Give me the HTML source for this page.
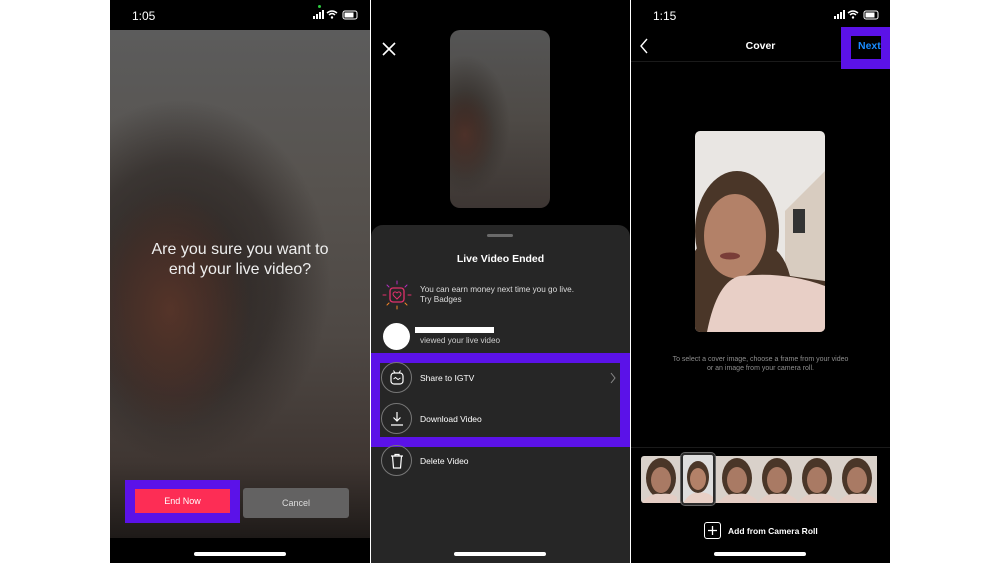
<!DOCTYPE html>
<html><head><meta charset="utf-8"><style>
*{margin:0;padding:0;box-sizing:border-box}
body{width:1000px;height:563px;background:#fff;position:relative;overflow:hidden;font-family:"Liberation Sans",sans-serif}
.a{position:absolute}
.t{color:#fff;white-space:nowrap}
</style></head><body>

<!-- LEFT PANEL -->
<div class="a" style="left:110px;top:0;width:260px;height:563px;background:#000;overflow:hidden">
  <div class="a t" style="left:22px;top:9px;font-size:12px">1:05</div>
  <div class="a" style="left:208px;top:5px;width:3px;height:3px;border-radius:50%;background:#2ecc40"></div>
  <svg class="a" style="left:203px;top:10px" width="48" height="10">
    <rect x="0" y="6" width="2" height="3" fill="#fff"/><rect x="3" y="4" width="2" height="5" fill="#fff"/><rect x="6" y="2" width="2" height="7" fill="#fff"/><rect x="9" y="0" width="2" height="9" fill="#fff"/>
    <path d="M14 3 Q19 -1 24 3 M16 5 Q19 2 22 5" stroke="#fff" stroke-width="1.5" fill="none"/><circle cx="19" cy="7.5" r="1.2" fill="#fff"/>
    <rect x="30" y="1" width="14" height="8" rx="2" stroke="#fff" fill="none"/><rect x="31.5" y="2.5" width="9" height="5" fill="#fff"/>
  </svg>
  <div class="a" style="left:0;top:30px;width:260px;height:508px;background:
    radial-gradient(ellipse 80px 120px at 60px 280px,#553429 0%,rgba(75,48,40,.7) 55%,rgba(60,50,45,0) 100%),
    radial-gradient(ellipse 150px 180px at 70px 250px,#2a2320 0%,rgba(40,34,32,.6) 65%,rgba(0,0,0,0) 100%),
    linear-gradient(180deg,#5c5c5c 0%,#57534f 30%,#4e4844 60%,#3f3632 85%,#1e1a18 100%)"></div>
  <div class="a t" style="left:0;top:240px;width:260px;text-align:center;font-size:16px;line-height:20px;color:#eee">Are you sure you want to<br>end your live video?</div>
  <div class="a" style="left:15px;top:480px;width:115px;height:43px;background:#5b12e8"></div>
  <div class="a t" style="left:25px;top:489px;width:95px;height:24px;background:#fd2d55;text-align:center;line-height:24px;font-size:9px">End Now</div>
  <div class="a t" style="left:133px;top:488px;width:106px;height:30px;background:#636262;border-radius:3px;text-align:center;line-height:30px;font-size:9px;color:#ddd">Cancel</div>
  <div class="a" style="left:84px;top:552px;width:92px;height:4px;border-radius:2px;background:#fff"></div>
</div>

<!-- MIDDLE PANEL -->
<div class="a" style="left:371px;top:0;width:259px;height:563px;background:#000;overflow:hidden">
  <svg class="a" style="left:11px;top:42px" width="14" height="14"><path d="M1 1L13 13M13 1L1 13" stroke="#fff" stroke-width="1.6"/></svg>
  <div class="a" style="left:79px;top:30px;width:100px;height:178px;border-radius:10px;background:
    radial-gradient(ellipse 30px 45px at 15px 105px,#4d3129 0%,rgba(70,45,38,0) 100%),
    radial-gradient(ellipse 45px 70px at 15px 95px,#2a2420 0%,rgba(0,0,0,0) 100%),
    linear-gradient(180deg,#555 0%,#4e4a46 50%,#3d3633 100%)"></div>
  <div class="a" style="left:0;top:225px;width:259px;height:338px;background:#262626;border-radius:12px 12px 0 0"></div>
  <div class="a" style="left:116px;top:234px;width:26px;height:3px;border-radius:2px;background:#6a6a6a"></div>
  <div class="a t" style="left:0;top:253px;width:259px;text-align:center;font-size:10.5px;font-weight:bold">Live Video Ended</div>
  <svg class="a" style="left:11px;top:280px" width="30" height="30">
    <g stroke-width="1" stroke-linecap="round">
    <path d="M15 1V4" stroke="#b42fbf"/><path d="M15 26V29" stroke="#f58529"/><path d="M1 15H4" stroke="#e1306c"/><path d="M26 15H29" stroke="#e1306c"/>
    <path d="M5 5L7 7" stroke="#b42fbf"/><path d="M25 5L23 7" stroke="#b42fbf"/><path d="M5 25L7 23" stroke="#f58529"/><path d="M25 25L23 23" stroke="#f58529"/></g>
    <rect x="8" y="8" width="14" height="14" rx="3" stroke="#e1306c" stroke-width="1.3" fill="none"/>
    <path d="M15 19 L11.5 15.5 A2 2 0 0 1 15 12.8 A2 2 0 0 1 18.5 15.5Z" stroke="#e1306c" stroke-width="1" fill="none"/>
  </svg>
  <div class="a t" style="left:49px;top:285px;font-size:8.2px;line-height:10px;color:#ddd">You can earn money next time you go live.<br>Try Badges</div>
  <div class="a" style="left:12px;top:323px;width:27px;height:27px;border-radius:50%;background:#fff"></div>
  <div class="a" style="left:44px;top:327px;width:79px;height:6px;background:#fff"></div>
  <div class="a t" style="left:49px;top:336px;font-size:8.2px;color:#ccc">viewed your live video</div>
  <div class="a" style="left:-1px;top:353px;width:260px;height:94px;background:#5b12e8"></div>
  <div class="a" style="left:9px;top:363px;width:240px;height:74px;background:#262626"></div>
  <div class="a" style="left:10px;top:362px;width:31px;height:31px;border-radius:50%;border:1px solid #777"></div>
  <svg class="a" style="left:17px;top:369px" width="18" height="18"><rect x="3" y="4" width="12" height="11" rx="3" stroke="#fff" stroke-width="1.2" fill="none"/><path d="M7 4L5.5 1.5M11 4L12.5 1.5" stroke="#fff" stroke-width="1"/><path d="M5.5 10L7.5 8.5L10 10.5L12.5 9" stroke="#fff" stroke-width="1" fill="none"/></svg>
  <div class="a t" style="left:49px;top:373px;font-size:8.5px">Share to IGTV</div>
  <svg class="a" style="left:238px;top:372px" width="8" height="12"><path d="M2 1L6 6L2 11" stroke="#888" stroke-width="1" fill="none"/></svg>
  <div class="a" style="left:10px;top:403px;width:31px;height:31px;border-radius:50%;border:1px solid #777"></div>
  <svg class="a" style="left:17px;top:410px" width="18" height="18"><path d="M9 2V11M5.5 7.5L9 11L12.5 7.5M3 15H15" stroke="#fff" stroke-width="1.2" fill="none"/></svg>
  <div class="a t" style="left:49px;top:414px;font-size:8.5px">Download Video</div>
  <div class="a" style="left:10px;top:445px;width:31px;height:31px;border-radius:50%;border:1px solid #777"></div>
  <svg class="a" style="left:17px;top:452px" width="18" height="18"><path d="M3 4H15M7 4V2.5H11V4M4.5 4L5.5 16H12.5L13.5 4" stroke="#fff" stroke-width="1.2" fill="none"/></svg>
  <div class="a t" style="left:49px;top:456px;font-size:8.5px">Delete Video</div>
  <div class="a" style="left:83px;top:552px;width:92px;height:4px;border-radius:2px;background:#fff"></div>
</div>

<!-- RIGHT PANEL -->
<div class="a" style="left:631px;top:0;width:259px;height:563px;background:#000;overflow:hidden">
  <div class="a t" style="left:22px;top:9px;font-size:12px">1:15</div>
  <svg class="a" style="left:203px;top:10px" width="48" height="10">
    <rect x="0" y="6" width="2" height="3" fill="#fff"/><rect x="3" y="4" width="2" height="5" fill="#fff"/><rect x="6" y="2" width="2" height="7" fill="#fff"/><rect x="9" y="0" width="2" height="9" fill="#fff"/>
    <path d="M14 3 Q19 -1 24 3 M16 5 Q19 2 22 5" stroke="#fff" stroke-width="1.5" fill="none"/><circle cx="19" cy="7.5" r="1.2" fill="#fff"/>
    <rect x="30" y="1" width="14" height="8" rx="2" stroke="#fff" fill="none"/><rect x="31.5" y="2.5" width="9" height="5" fill="#fff"/>
  </svg>
  <svg class="a" style="left:8px;top:38px" width="10" height="16"><path d="M8 1L2 8L8 15" stroke="#fff" stroke-width="1.4" fill="none"/></svg>
  <div class="a t" style="left:0;top:40px;width:259px;text-align:center;font-size:10.5px;font-weight:bold">Cover</div>
  <div class="a" style="left:0;top:61px;width:259px;height:1px;background:#1a1a1a"></div>
  <div class="a" style="left:210px;top:27px;width:49px;height:42px;background:#5b12e8"></div>
  <div class="a" style="left:220px;top:36px;width:30px;height:23px;background:#000"></div>
  <div class="a" style="left:227px;top:40px;font-size:10.5px;font-weight:bold;color:#1a8cff">Next</div>
  <svg class="a" style="left:64px;top:131px" width="130" height="201" viewBox="0 0 130 201">
    <defs><clipPath id="c"><rect width="130" height="201" rx="5"/></clipPath></defs>
    <g clip-path="url(#c)">
    <rect width="130" height="201" fill="#e9e6e3"/>
    <path d="M90 80L130 40V201H90Z" fill="#d8ccc0"/>
    <rect x="98" y="78" width="12" height="24" fill="#333"/>
    <ellipse cx="42" cy="100" rx="42" ry="60" fill="#4a3628"/>
    <path d="M0 201 L0 120 Q20 90 45 110 Q85 105 95 145 L130 150 V201Z" fill="#4a3628"/>
    <ellipse cx="40" cy="105" rx="31" ry="42" fill="#b38168"/>
    <path d="M12 201 Q22 150 45 145 Q90 140 130 155 V201Z" fill="#e8cfc6"/>
    <ellipse cx="35" cy="125" rx="10" ry="3.5" fill="#7a3d38"/>
    </g>
  </svg>
  <div class="a" style="left:0;top:356px;width:259px;text-align:center;font-size:7px;line-height:8.5px;color:#8e8e8e">To select a cover image, choose a frame from your video<br>or an image from your camera roll.</div>
  <div class="a" style="left:0;top:447px;width:259px;height:1px;background:#1a1a1a"></div>
  <svg class="a" style="left:10px;top:456px" width="239" height="47">
    <defs><clipPath id="f"><rect width="239" height="47" rx="3"/></clipPath>
    <g id="fr"><rect width="40" height="47" fill="#d9d1ca"/><ellipse cx="20" cy="22" rx="15" ry="20" fill="#4a3628"/><ellipse cx="20" cy="24" rx="10" ry="13" fill="#a97a64"/><path d="M0 47Q10 36 20 38Q32 36 40 44V47Z" fill="#e4cdc4"/></g></defs>
    <g clip-path="url(#f)">
    <use href="#fr" x="0"/><use href="#fr" x="36"/><use href="#fr" x="76"/><use href="#fr" x="116"/><use href="#fr" x="156"/><use href="#fr" x="196"/>
    </g>
  </svg>
  <div class="a" style="left:50px;top:453px;width:34px;height:52px;border:2px solid #2a2a2a;border-radius:4px;outline:1px solid #666;overflow:hidden;background:#ddd">
    <svg width="30" height="48"><ellipse cx="15" cy="22" rx="11" ry="16" fill="#4a3628"/><ellipse cx="15" cy="24" rx="8" ry="11" fill="#b38168"/><path d="M0 48Q8 36 15 38Q24 36 30 42V48Z" fill="#e8d0c6"/></svg>
  </div>
  <div class="a" style="left:73px;top:522px;width:17px;height:17px;border:1.3px solid #fff;border-radius:3px"></div>
  <svg class="a" style="left:73px;top:522px" width="17" height="17"><path d="M8.5 4V13M4 8.5H13" stroke="#fff" stroke-width="1.3"/></svg>
  <div class="a t" style="left:97px;top:526px;font-size:8.5px;font-weight:bold">Add from Camera Roll</div>
  <div class="a" style="left:83px;top:552px;width:92px;height:4px;border-radius:2px;background:#fff"></div>
</div>
</body></html>
